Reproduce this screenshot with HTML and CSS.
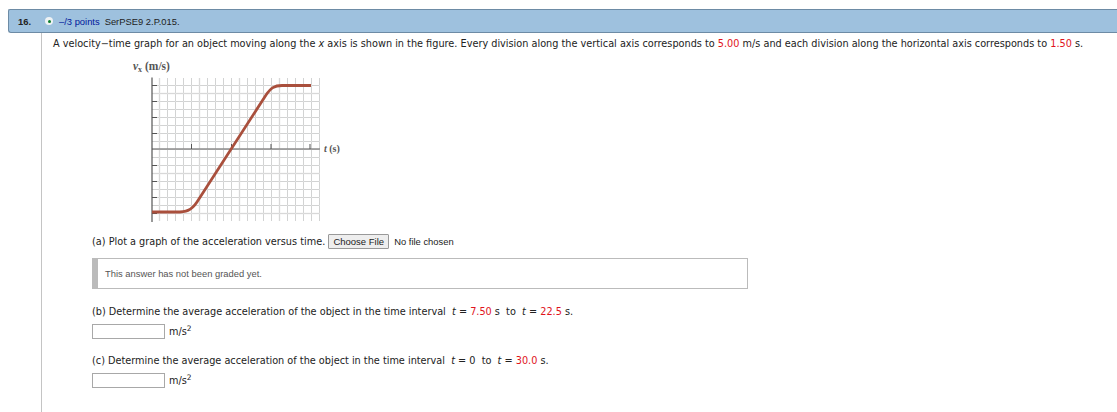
FILE: index.html
```html
<!DOCTYPE html>
<html lang="en">
<head>
    <meta charset="UTF-8">
    <title>Question 16</title>
    <link rel="stylesheet" href="styles.css">
</head>
<body>

    <!-- Question header -->
    <div class="question-bar">
        <span class="question-num">16.</span>
        <span class="status-dot"><span class="status-core"></span></span>
        <span class="points">&ndash;/3 points</span>
        <span class="source">SerPSE9 2.P.015.</span>
    </div>

    <div class="question-body">
        <p class="intro">A velocity&minus;time graph for an object moving along the <i>x</i> axis is shown in the figure. Every division along the vertical axis corresponds to <span class="num">5.00</span> m/s and each division along the horizontal axis corresponds to <span class="num">1.50</span> s.</p>

        <!-- Figure -->
        <div class="figure">
            <svg width="240" height="175" viewBox="0 -6 240 175">
                <defs>
                    <pattern id="grid" x="7" y="4" width="8" height="8" patternUnits="userSpaceOnUse">
                        <path d="M8 .5H.5V8" fill="none" stroke="#d2d3d3" stroke-width="1"/>
                    </pattern>
                </defs>
                <rect x="32" y="13" width="168" height="143" fill="url(#grid)"/>
                <path d="M39.500 13V156M79.500 13V156M119.500 13V156M159.500 13V156M32 28.500H200M32 108.500H200M32 148.500H200" fill="none" stroke="#e2e2e2" stroke-width="2" opacity=".4"/>
                <path d="M32 84H200" stroke="#8c8d8d" stroke-width="1.500"/>
                <path d="M32 12.500V157" stroke="#555" stroke-width="1.200"/>
                <path d="M32 20.500h5M32 36.500h5M32 52.500h5M32 68.500h5M32 100.500h5M32 116.500h5M32 132.500h5M32 148.500h5" stroke="#555"/>
                <path d="M71.500 79v5M111.500 79v5M151 79v5M190 79v5" stroke="#555"/>
                <path d="M32 147H56C66 147 71 146 77 137L146 30C151 23 154 20.500 162 20.500H191" fill="none" stroke="#a94f3c" stroke-width="2.800"/>
                <text class="axis-label" x="13" y="5"><tspan class="axis-var">v</tspan><tspan class="axis-sub" dy="2">x</tspan><tspan dy="-2"> (m/s)</tspan></text>
                <text class="axis-label small" x="204" y="87"><tspan class="axis-var">t</tspan> (s)</text>
            </svg>
        </div>

        <div class="part part-a">
            <span>(a) Plot a graph of the acceleration versus time.</span>
            <button class="file-btn">Choose File</button>
            <span class="file-name">No file chosen</span>
        </div>

        <div class="graded-note">This answer has not been graded yet.</div>

        <div class="part part-b">
            <p>(b) Determine the average acceleration of the object in the time interval&nbsp; <i>t</i> = <span class="num">7.50</span> s&nbsp; to&nbsp; <i>t</i> = <span class="num">22.5</span> s.</p>
            <div class="answer-row">
                <input type="text" class="answer">
                <span class="unit">m/s<sup>2</sup></span>
            </div>
        </div>

        <div class="part part-c">
            <p>(c) Determine the average acceleration of the object in the time interval&nbsp; <i>t</i> = 0&nbsp; to&nbsp; <i>t</i> = <span class="num">30.0</span> s.</p>
            <div class="answer-row">
                <input type="text" class="answer">
                <span class="unit">m/s<sup>2</sup></span>
            </div>
        </div>
    </div>

</body>
</html>
```

FILE: styles.css
```css
html, body {
    height: 100%;
}
body {
    margin: 0;
    padding: 9px 0 0 8px;
    box-sizing: border-box;
    background: white;
    color: #222;
    font-family: "DejaVu Sans", sans-serif;
    font-size: 9.73px;
    overflow: hidden;
}
p {
    margin: 0;
    line-height: 12px;
}

/* Question header */
.question-bar {
    display: flex;
    align-items: center;
    height: 22px;
    background: #9ec1de;
    border: 1px solid #6d8ba5;
    border-right: none;
    border-top-left-radius: 2px;
    border-bottom-left-radius: 3px;
    font-family: "Liberation Sans", sans-serif;
    font-size: 9.4px;
}
.question-num {
    width: 26px;
    padding-left: 9px;
    font-weight: bold;
}
.status-dot {
    display: flex;
    align-items: center;
    justify-content: center;
    width: 8px;
    height: 8px;
    border-radius: 50%;
    background: #eef2f4;
    margin: 0 6px 0 1px;
}
.status-core {
    width: 3px;
    height: 3px;
    border-radius: 50%;
    background: #0a7d2c;
}
.points {
    color: #00189c;
    margin-right: 5px;
}

/* Body */
.question-body {
    margin-left: 33px;
    padding: 5px 0 0 11px;
    border-left: 1px solid #c4c4c4;
    height: 380px;
    white-space: nowrap;
}
.num {
    color: #e0141c;
}
.figure {
    height: 175px;
    margin: 9px 0 0 67px;
}
.axis-label {
    font-family: "Liberation Serif", serif;
    font-size: 11.5px;
    font-weight: bold;
    fill: #555;
}
.axis-label.small {
    font-size: 10px;
}
.axis-var {
    font-style: italic;
}
.axis-sub {
    font-size: 8px;
}

/* Parts */
.part {
    margin-left: 39px;
}
.part-a {
    display: flex;
    align-items: center;
}
.file-btn {
    margin-left: 3px;
    padding: 0 4px;
    width: 61px;
    height: 15px;
    background: #eee;
    border: 1px solid #999;
    border-radius: 1px;
    color: #222;
    font-family: "Liberation Sans", sans-serif;
    font-size: 9.5px;
}
.file-name {
    margin-left: 5px;
    font-family: "Liberation Sans", sans-serif;
    font-size: 9.4px;
}
.graded-note {
    display: flex;
    align-items: center;
    margin: 9px 0 0 39px;
    width: 642px;
    height: 29px;
    border: 1px solid #bbb;
    border-left: 6px solid #bbb;
    padding-left: 7px;
    font-family: "Liberation Sans", sans-serif;
    font-size: 9.4px;
    color: #555;
}
.part-b {
    margin-top: 17px;
}
.part-c {
    margin-top: 16px;
}
.answer-row {
    display: flex;
    align-items: center;
    margin-top: 6px;
}
.answer {
    box-sizing: border-box;
    width: 73px;
    height: 15px;
    margin: 0;
    padding: 0;
    border: 1px solid #a8a8a8;
}
.unit {
    margin-left: 4px;
    line-height: 15px;
}
.unit sup {
    font-size: 7.5px;
    line-height: 0;
}
```
